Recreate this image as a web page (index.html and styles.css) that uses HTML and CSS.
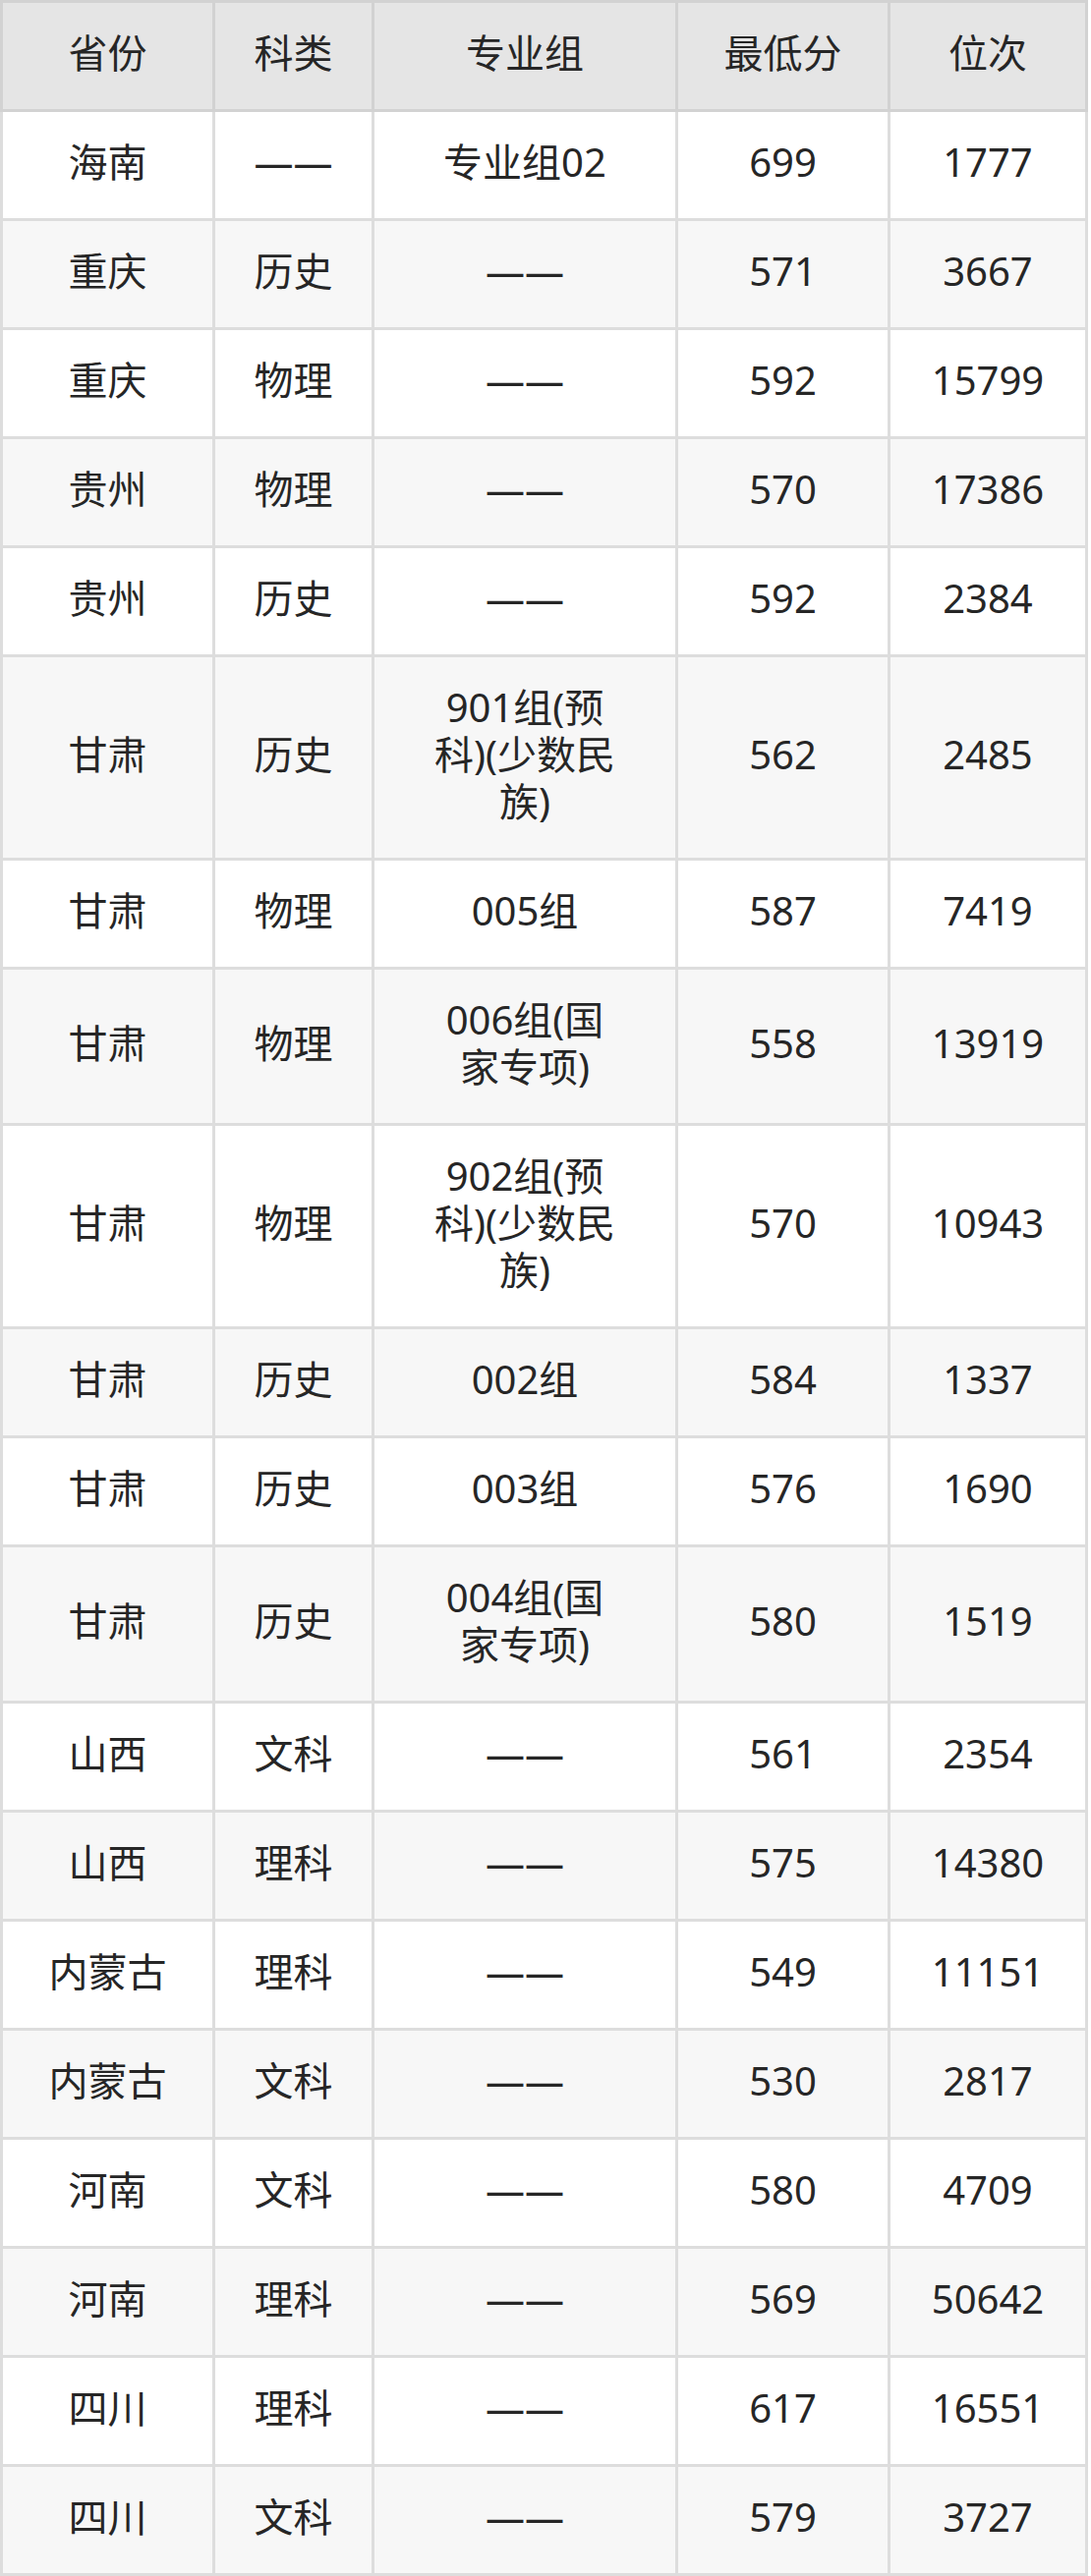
FILE: index.html
```html
<!DOCTYPE html>
<html lang="zh-CN">
<head>
<meta charset="utf-8">
<title>录取分数</title>
<link rel="stylesheet" href="styles.css">
</head>
<body>
<div class="table">
  <div class="head">
    <div class="cell">省份</div>
    <div class="cell">科类</div>
    <div class="cell group">专业组</div>
    <div class="cell">最低分</div>
    <div class="cell">位次</div>
  </div>
  <div class="body">
    <div class="cell">海南</div><div class="cell">——</div><div class="cell group">专业组02</div><div class="cell">699</div><div class="cell">1777</div>
    <div class="cell alt">重庆</div><div class="cell alt">历史</div><div class="cell alt group">——</div><div class="cell alt">571</div><div class="cell alt">3667</div>
    <div class="cell">重庆</div><div class="cell">物理</div><div class="cell group">——</div><div class="cell">592</div><div class="cell">15799</div>
    <div class="cell alt">贵州</div><div class="cell alt">物理</div><div class="cell alt group">——</div><div class="cell alt">570</div><div class="cell alt">17386</div>
    <div class="cell">贵州</div><div class="cell">历史</div><div class="cell group">——</div><div class="cell">592</div><div class="cell">2384</div>
    <div class="cell alt">甘肃</div><div class="cell alt">历史</div><div class="cell alt group">901组(预科)(少数民族)</div><div class="cell alt">562</div><div class="cell alt">2485</div>
    <div class="cell">甘肃</div><div class="cell">物理</div><div class="cell group">005组</div><div class="cell">587</div><div class="cell">7419</div>
    <div class="cell alt">甘肃</div><div class="cell alt">物理</div><div class="cell alt group">006组(国家专项)</div><div class="cell alt">558</div><div class="cell alt">13919</div>
    <div class="cell">甘肃</div><div class="cell">物理</div><div class="cell group">902组(预科)(少数民族)</div><div class="cell">570</div><div class="cell">10943</div>
    <div class="cell alt">甘肃</div><div class="cell alt">历史</div><div class="cell alt group">002组</div><div class="cell alt">584</div><div class="cell alt">1337</div>
    <div class="cell">甘肃</div><div class="cell">历史</div><div class="cell group">003组</div><div class="cell">576</div><div class="cell">1690</div>
    <div class="cell alt">甘肃</div><div class="cell alt">历史</div><div class="cell alt group">004组(国家专项)</div><div class="cell alt">580</div><div class="cell alt">1519</div>
    <div class="cell">山西</div><div class="cell">文科</div><div class="cell group">——</div><div class="cell">561</div><div class="cell">2354</div>
    <div class="cell alt">山西</div><div class="cell alt">理科</div><div class="cell alt group">——</div><div class="cell alt">575</div><div class="cell alt">14380</div>
    <div class="cell">内蒙古</div><div class="cell">理科</div><div class="cell group">——</div><div class="cell">549</div><div class="cell">11151</div>
    <div class="cell alt">内蒙古</div><div class="cell alt">文科</div><div class="cell alt group">——</div><div class="cell alt">530</div><div class="cell alt">2817</div>
    <div class="cell">河南</div><div class="cell">文科</div><div class="cell group">——</div><div class="cell">580</div><div class="cell">4709</div>
    <div class="cell alt">河南</div><div class="cell alt">理科</div><div class="cell alt group">——</div><div class="cell alt">569</div><div class="cell alt">50642</div>
    <div class="cell">四川</div><div class="cell">理科</div><div class="cell group">——</div><div class="cell">617</div><div class="cell">16551</div>
    <div class="cell alt">四川</div><div class="cell alt">文科</div><div class="cell alt group">——</div><div class="cell alt">579</div><div class="cell alt">3727</div>
  </div>
</div>
</body>
</html>
```
FILE: styles.css
```css
html, body {
  margin: 0;
  padding: 0;
  background: #ffffff;
}

.table {
  width: 1107px;
  font-family: "Noto Sans", "Noto Sans CJK SC", sans-serif;
  font-size: 40px;
  line-height: 48px;
  color: #262626;
}

.head,
.body {
  display: grid;
  grid-template-columns: 213px 159px 306px 213px 198px;
  column-gap: 3px;
  row-gap: 3px;
}

.head {
  background: #d2d2d2;
  padding: 3px 3px 3px 3px;
}

.body {
  background: #dddddd;
  padding: 0 3px 3px 3px;
}

.cell {
  display: flex;
  align-items: center;
  justify-content: center;
  text-align: center;
  padding: 27px 10px 33px;
  background: #ffffff;
}

.head .cell {
  background: #e5e5e5;
}

.cell.alt {
  background: #f7f7f7;
}

.cell.group {
  padding-left: 56px;
  padding-right: 56px;
}
```
